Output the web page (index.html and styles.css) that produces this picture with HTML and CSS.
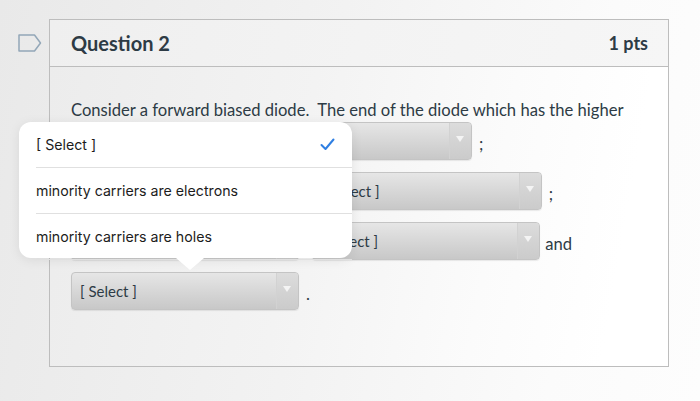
FILE: index.html
```html
<!DOCTYPE html>
<html lang="en">
<head>
    <meta charset="UTF-8">
    <meta name="viewport" content="width=device-width, initial-scale=1.0">
    <title>Question 2</title>
    <link rel="stylesheet" href="styles.css">
</head>
<body>
    <div class="page">
        <!-- Marcador da questão -->
        <div class="flag-col">
            <svg class="flag" width="24" height="18" viewBox="0 0 24 18">
                <path d="M1 1 H16.5 L22.5 9 L16.5 17 H1 Z" fill="none" stroke="#93a7b8" stroke-width="1.5" stroke-linejoin="round"/>
            </svg>
        </div>

        <div class="question">
            <div class="question-header">
                <span class="question-title">Question 2</span>
                <span class="question-points">1 pts</span>
            </div>
            <div class="question-body">
                <p class="question-text">
                    Consider a forward biased diode.&nbsp; The end of the diode which has the higher
                    potential is labelled the <span class="select"><span class="select-label">[ Select ]</span><span class="select-arrow"></span></span>;<br>
                    the other end, near the junction,&nbsp; <span class="select"><span class="select-label">[ Select ]</span><span class="select-arrow"></span></span>;<br>
                    <span class="select"><span class="select-label">[ Select ]</span><span class="select-arrow"></span></span> <span class="select second"><span class="select-label">[ Select ]</span><span class="select-arrow"></span></span>and<br>
                    <span class="select"><span class="select-label">[ Select ]</span><span class="select-arrow"></span></span>.
                </p>
            </div>
        </div>
    </div>

    <!-- Lista de opções aberta -->
    <div class="popover">
        <div class="option selected">
            <span>[ Select ]</span>
            <svg class="check" width="15" height="13" viewBox="0 0 15 13">
                <path d="M1.5 7 L5.5 11 L13.5 1.5" fill="none" stroke="#2f7fe2" stroke-width="2" stroke-linecap="round" stroke-linejoin="round"/>
            </svg>
        </div>
        <div class="option">minority carriers are electrons</div>
        <div class="option">minority carriers are holes</div>
        <div class="popover-arrow"></div>
    </div>
</body>
</html>
```

FILE: styles.css
```css
body {
    margin: 0;
    height: 401px;
    overflow: hidden;
    font-family: Lato, "Noto Sans", sans-serif;
    color: #2d3b45;
    background: linear-gradient(100deg, #e9e9e9 0%, #f2f2f2 45%, #fbfbfb 80%, #fdfdfd 100%);
}
.page {
    display: flex;
    padding-top: 19px;
}
.flag-col {
    width: 49px;
    padding-top: 15px;
    box-sizing: border-box;
    padding-left: 18px;
}
.flag {
    display: block;
}
.question {
    width: 620px;
    height: 348px;
    box-sizing: border-box;
    border: 1px solid #bdbdbd;
    display: flex;
    flex-direction: column;
}
.question-header {
    height: 47px;
    box-sizing: border-box;
    border-bottom: 1px solid #bdbdbd;
    background: linear-gradient(100deg, #efefef 0%, #f3f3f3 50%, #f6f6f6 100%);
    display: flex;
    align-items: center;
    justify-content: space-between;
    padding: 0 20px 0 21px;
}
.question-title {
    font-size: 20px;
    font-weight: bold;
}
.question-points {
    font-size: 18px;
    font-weight: bold;
}
.question-body {
    flex: 1;
    padding: 31px 21px 0 21px;
    background: linear-gradient(100deg, #ececec 0%, #f3f3f3 40%, #fbfbfb 70%, #ffffff 90%);
}
.question-text {
    margin: 0;
    font-size: 16.6px;
    line-height: 24px;
}
.select {
    display: inline-flex;
    width: 228px;
    height: 38px;
    box-sizing: border-box;
    margin: 0 7px 12px 0;
    border: 1px solid #c4c4c4;
    border-radius: 4px;
    background: linear-gradient(#e6e6e6, #c8c8c8);
    box-shadow: 0 1px 1px rgba(0,0,0,0.08);
    vertical-align: 3px;
    overflow: hidden;
}
.select.second {
    margin-left: 2px;
    margin-right: 5px;
}
.select-label {
    flex: 1;
    padding-left: 8px;
    font-size: 15px;
    line-height: 36px;
}
.select-arrow {
    width: 21px;
    position: relative;
    background: linear-gradient(#dcdcdc, #cbcbcb);
    border-left: 1px solid #d2d2d2;
}
.select-arrow::after {
    content: "";
    position: absolute;
    left: 6px;
    top: 13px;
    border-left: 4.5px solid transparent;
    border-right: 4.5px solid transparent;
    border-top: 6px solid #f4f4f4;
}
.popover {
    position: absolute;
    left: 19px;
    top: 122px;
    width: 333px;
    height: 136px;
    background: white;
    border-radius: 12px;
    box-shadow: 0 2px 12px rgba(0,0,0,0.08);
    font-family: Inter, "Liberation Sans", sans-serif;
    font-size: 14.2px;
    color: #1c1c1c;
}
.option {
    height: 45px;
    margin-left: 17px;
    padding-right: 17px;
    display: flex;
    align-items: center;
    justify-content: space-between;
    border-bottom: 1px solid #e0e0e0;
}
.option:last-of-type {
    border-bottom: none;
}
.popover-arrow {
    position: absolute;
    left: 157px;
    bottom: -12px;
    width: 0;
    height: 0;
    border-left: 14px solid transparent;
    border-right: 14px solid transparent;
    border-top: 12px solid white;
}
```
